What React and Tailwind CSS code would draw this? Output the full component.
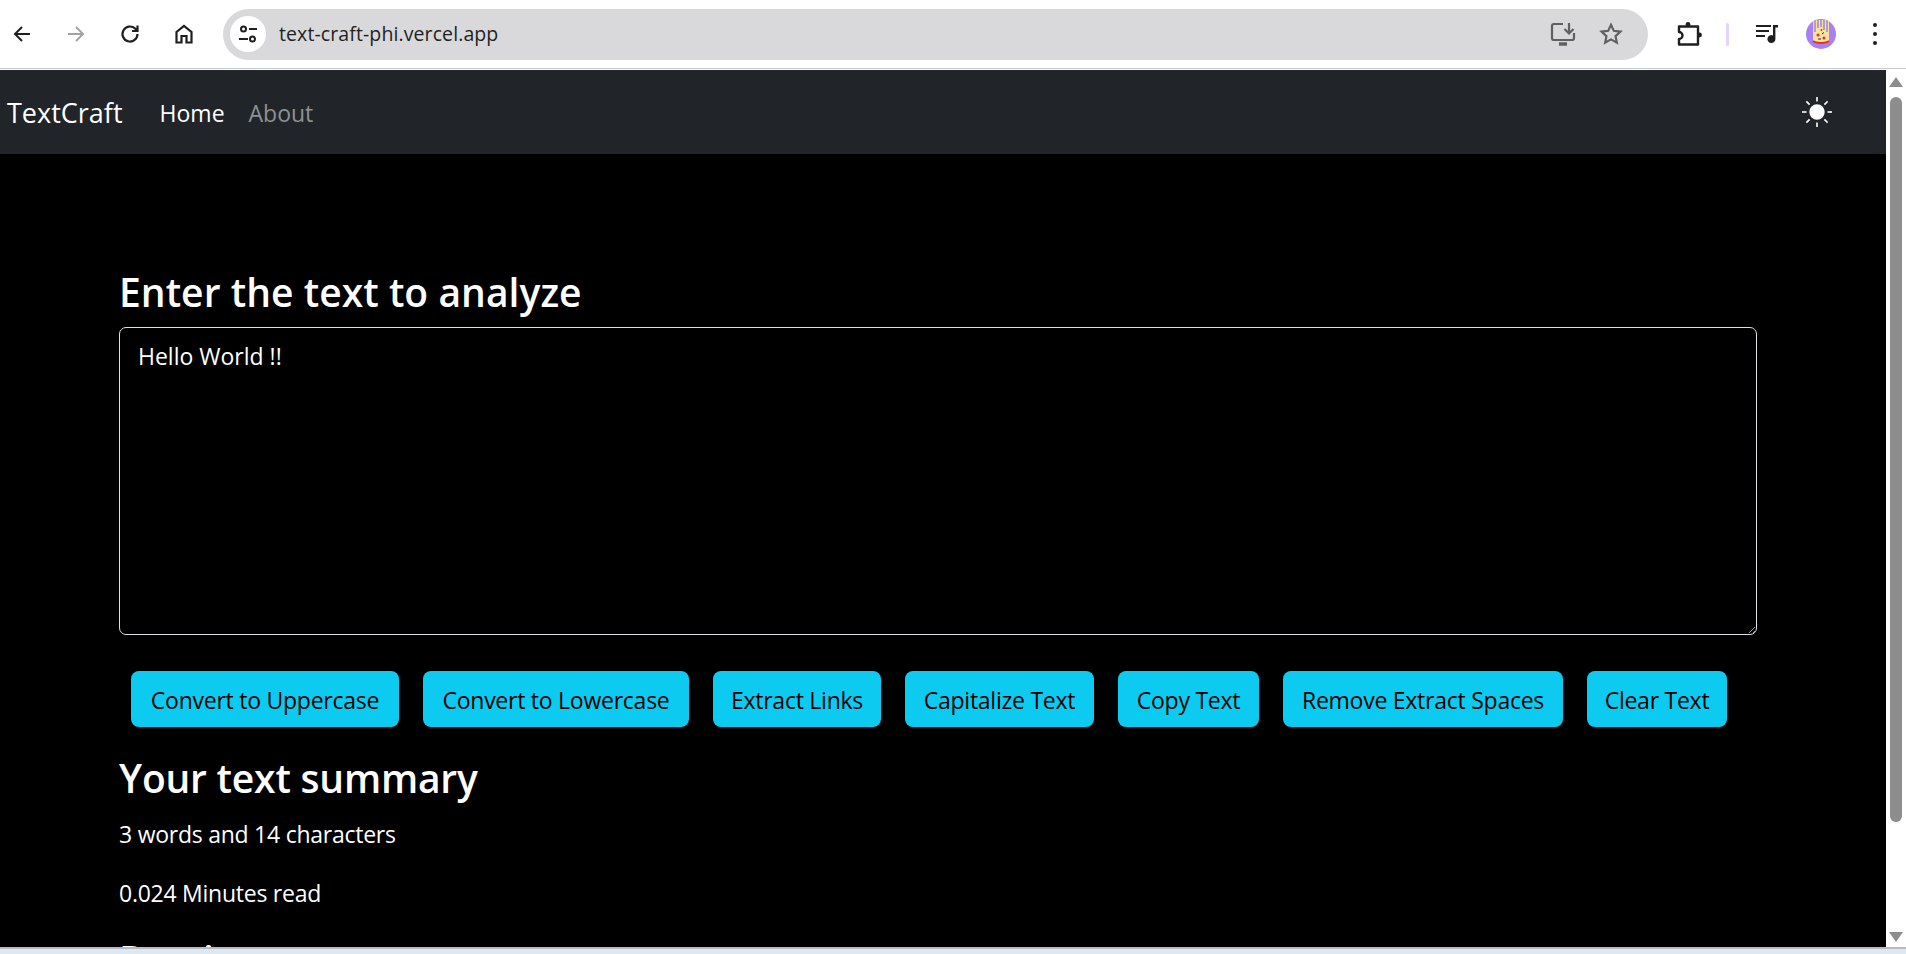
import React from "react";

const font = "font-['Open_Sans','Noto_Sans',sans-serif]";

// Browser toolbar icons
function ToolbarIcon({ children, className = "" }) {
  return (
    <svg width="24" height="24" viewBox="0 0 24 24" fill="none" stroke="currentColor" strokeWidth="2" className={className}>
      {children}
    </svg>
  );
}

function Toolbar() {
  return (
    <div className="flex h-[68px] items-center bg-white text-[#1f1f1f]">
      <div className="flex w-[223px] shrink-0 items-center gap-[30px] pl-[10px]">
        <ToolbarIcon><path d="M20 12H5M12 5l-7 7 7 7" /></ToolbarIcon>
        <ToolbarIcon className="text-[#a3a3a3]"><path d="M4 12h15M12 5l7 7-7 7" /></ToolbarIcon>
        <ToolbarIcon><path d="M19.500 12a7.500 7.500 0 1 1-2.400-5.500L19.500 9M19.500 3.500V9H14" strokeWidth="2.200" /></ToolbarIcon>
        <ToolbarIcon><path d="M4.500 20.500V10L12 4l7.500 6v10.500h-5V14h-5v6.500z" strokeWidth="2.200" /></ToolbarIcon>
      </div>
      <div className="flex h-[51px] w-[1425px] shrink-0 items-center rounded-full bg-[#d9d9db] pl-[7px] pr-[24px]">
        <div className="flex h-9 w-9 items-center justify-center rounded-full bg-white">
          <svg width="22" height="22" viewBox="0 0 22 22" fill="none" stroke="#1f1f1f" strokeWidth="2">
            <circle cx="6.500" cy="6" r="2.500" />
            <circle cx="15.500" cy="16" r="2.500" />
            <path d="M12 6h8M2 16h9" />
          </svg>
        </div>
        <span className={`ml-[13px] text-[19.500px] tracking-[0.1px] text-[#1f1f1f] ${font}`}>text-craft-phi.vercel.app</span>
        <div className="ml-auto flex items-center gap-[22px] text-[#5f6060]">
          <svg width="26" height="26" viewBox="0 0 26 26" fill="none" stroke="currentColor" strokeWidth="2.200">
            <path d="M13 3H4a2 2 0 0 0-2 2v12a2 2 0 0 0 2 2h18a2 2 0 0 0 2-2v-5" />
            <path d="M9 23h8" strokeWidth="3.500" />
            <path d="M19 2v10M14.500 8l4.500 4.500L23.500 8" />
          </svg>
          <svg width="26" height="26" viewBox="0 0 24 24" fill="none" stroke="currentColor" strokeWidth="2">
            <path d="M12 3.500l2.600 5.600 6.100.7-4.500 4.200 1.200 6-5.400-3-5.400 3 1.200-6L3.300 9.800l6.100-.7z" />
          </svg>
        </div>
      </div>
      <div className="ml-[28px] flex items-center">
        <svg width="26" height="26" viewBox="0 0 26 26" fill="#1f1f1f" stroke="#1f1f1f" strokeWidth="2.400">
          <path d="M3 5.500h19v18H3v-5.500a3.500 3.500 0 0 0 0-7z" fill="none" strokeLinejoin="round" />
          <circle cx="12" cy="3.500" r="2.400" stroke="none" />
          <circle cx="23.500" cy="14" r="2.400" stroke="none" />
        </svg>
        <div className="ml-[24px] h-[23px] w-[3px] rounded-full bg-[#e4d4fb]" />
        <svg width="26" height="24" viewBox="0 0 26 24" fill="#1f1f1f" className="ml-[25px]">
          <path d="M2 3h15v2H2zM2 8h13v2H2zM2 13h9v2H2z" />
          <path d="M19 3h5v2.500h-2.600V17a4 4 0 1 1-2.400-3.600z" />
        </svg>
        <div className="ml-[26px] h-[30px] w-[30px] overflow-hidden rounded-full bg-[#a97ff5]">
          <svg width="30" height="30" viewBox="0 0 30 30">
            <path d="M7 1h16v22H7z" fill="#f3e2a0" />
            <path d="M9 1v12M12 1v8M15 1v7M18 1v10M21 1v12" stroke="#8f6fe0" strokeWidth="1.200" />
            <circle cx="12" cy="16" r="1.500" fill="#e5341e" />
            <circle cx="15.500" cy="11" r="1" fill="#e5341e" />
            <circle cx="18" cy="19" r="1.500" fill="#e5341e" />
            <path d="M12 20h3M16 15l2-1.500" stroke="#333" strokeWidth="1" />
            <path d="M7 22c3 2.500 13 2.500 16 0" stroke="#e5341e" strokeWidth="2" fill="none" />
          </svg>
        </div>
        <div className="ml-[37px] flex flex-col gap-[5px]">
          <div className="h-1 w-1 rounded-full bg-[#1f1f1f]" />
          <div className="h-1 w-1 rounded-full bg-[#1f1f1f]" />
          <div className="h-1 w-1 rounded-full bg-[#1f1f1f]" />
        </div>
      </div>
    </div>
  );
}

function SunIcon() {
  const rays = [0, 45, 90, 135, 180, 225, 270, 315];
  return (
    <svg width="30" height="30" viewBox="-15 -15 30 30">
      <circle r="7.700" fill="#fff" />
      {rays.map((deg) => (
        <line key={deg} x1="0" y1="-10.500" x2="0" y2="-15" stroke="#fff" strokeWidth="1.600" transform={`rotate(${deg})`} />
      ))}
    </svg>
  );
}

function Navbar() {
  return (
    <nav className={`flex h-[84px] shrink-0 items-center bg-[#212529] pl-[7px] pr-[54px] ${font}`}>
      <span className="pt-[2px] text-[27px] text-white">TextCraft</span>
      <a className="ml-[37px] pt-[2px] text-[23px] text-white">Home</a>
      <a className="ml-[24px] pt-[2px] text-[23px] text-[#8f9193]">About</a>
      <div className="ml-auto flex">
        <SunIcon />
      </div>
    </nav>
  );
}

const buttons = [
  { label: "Convert to Uppercase", width: "w-[268px]" },
  { label: "Convert to Lowercase", width: "w-[266px]" },
  { label: "Extract Links", width: "w-[168px]" },
  { label: "Capitalize Text", width: "w-[189px]" },
  { label: "Copy Text", width: "w-[141px]" },
  { label: "Remove Extract Spaces", width: "w-[280px]" },
  { label: "Clear Text", width: "w-[140px]" },
];

function Scrollbar() {
  return (
    <div className="flex w-5 shrink-0 flex-col items-center bg-white pt-[7px] pb-[5px]">
      <div className="h-0 w-0 border-x-[7px] border-b-[10px] border-x-transparent border-b-[#8d8d8d]" />
      <div className="mt-[10px] h-[725px] w-3 rounded-full bg-[#8d8d8d]" />
      <div className="mt-auto h-0 w-0 border-x-[7px] border-t-[10px] border-x-transparent border-t-[#8d8d8d]" />
    </div>
  );
}

export default function App() {
  return (
    <div className="flex h-screen flex-col overflow-hidden bg-white">
      <Toolbar />
      <div className="h-[2px] shrink-0 border-t border-[#c8c8c8] bg-white" />
      <div className="flex min-h-0 flex-1">
        <div className="flex min-w-0 flex-1 flex-col overflow-hidden bg-black text-white">
          <Navbar />
          <main className={`pt-[114px] pl-[119px] pr-[129px] ${font}`}>
            <h2 className="text-[39px] leading-[48px] font-semibold tracking-[0.05px]">Enter the text to analyze</h2>
            <textarea
              readOnly
              defaultValue="Hello World !!"
              className="mt-[11px] block h-[308px] w-full rounded-[7px] border border-[#dee2e6] bg-black px-[18px] py-[11px] text-[23px] leading-[34px] text-white outline-none"
            />
            <div className="mt-[36px] flex gap-6 pl-[12px]">
              {buttons.map(({ label, width }) => (
                <button key={label} className={`h-[56px] rounded-[8px] bg-[#0dcaf0] pt-[3px] text-center text-[23px] tracking-[-0.25px] whitespace-nowrap text-black ${width}`}>
                  {label}
                </button>
              ))}
            </div>
            <h2 className="mt-[27px] text-[39px] leading-[48px] font-semibold tracking-[-0.2px]">Your text summary</h2>
            <p className="mt-[15px] text-[23px] leading-[34px] tracking-[-0.25px]">3 words and 14 characters</p>
            <p className="mt-[25px] text-[23px] leading-[34px] tracking-[-0.25px]">0.024 Minutes read</p>
            <h2 className="mt-[26px] text-[39px] leading-[48px] font-semibold">Preview</h2>
          </main>
        </div>
        <Scrollbar />
      </div>
      <div className="h-[7px] shrink-0 border-t-2 border-[#b4bcc4] bg-[#dfe7f0]" />
    </div>
  );
}
